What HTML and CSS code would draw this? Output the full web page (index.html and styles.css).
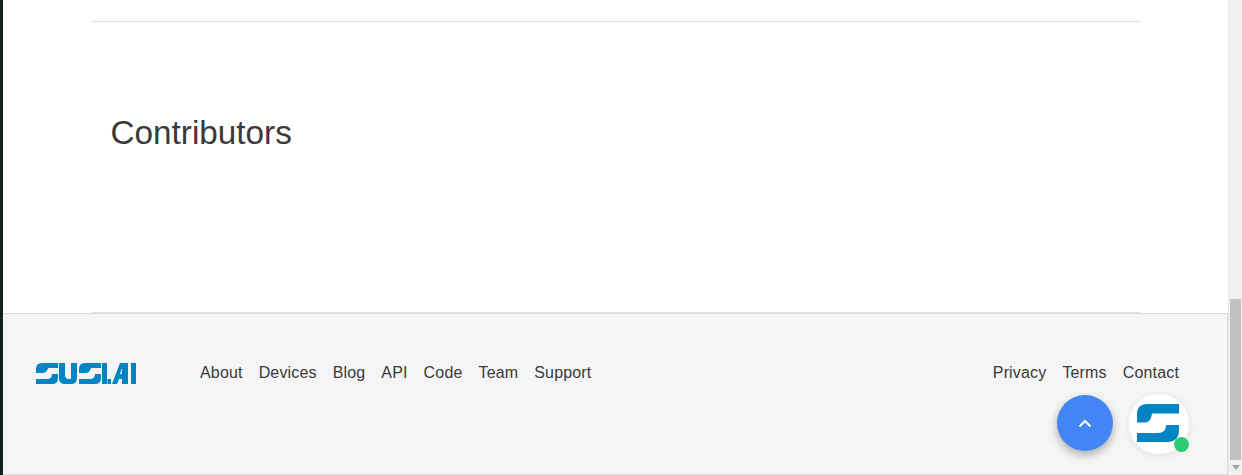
FILE: index.html
```html
<!DOCTYPE html>
<html lang="en">
<head>
    <meta charset="UTF-8">
    <title>SUSI.AI - Contributors</title>
    <link rel="stylesheet" href="styles.css">
</head>
<body>
    <div class="edge"></div>
    <div class="page">
        <main class="content">
            <hr class="rule">
            <h2 class="heading">Contributors</h2>
            <hr class="rule rule-bottom">
        </main>
        <footer class="footer">
            <a class="logo" href="#" aria-label="SUSI.AI">
                <svg width="100" height="21" viewBox="0 0 100 21" fill="#0084c4" fill-rule="evenodd">
                    <path d="M6 0H22V5H12Q11 10 6 10H0V6Q0 0 6 0Z"/>
                    <path d="M16 11H22V15Q22 21 16 21H0V16H11Q16 16 16 11Z"/>
                    <path d="M23 0H29V12Q29 16 33 16H35V0H41V15Q41 21 35 21H29Q23 21 23 15Z"/>
                    <path d="M49 0H65V5H55Q54 10 49 10H43V6Q43 0 49 0Z"/>
                    <path d="M59 11H65V15Q65 21 59 21H43V16H54Q59 16 59 11Z"/>
                    <path d="M66 0H71V21H66Z"/>
                    <path d="M71.5 16H75V21H71.5Z"/>
                    <path d="M76 21L84 0H92V21H86V16H83L81 21ZM86 6H85.5L84 11H86Z"/>
                    <path d="M95 0H100V21H95Z"/>
                </svg>
            </a>
            <nav class="links">
                <a href="#">About</a>
                <a href="#">Devices</a>
                <a href="#">Blog</a>
                <a href="#">API</a>
                <a href="#">Code</a>
                <a href="#">Team</a>
                <a href="#">Support</a>
            </nav>
            <nav class="links links-right">
                <a href="#">Privacy</a>
                <a href="#">Terms</a>
                <a href="#">Contact</a>
            </nav>
        </footer>
    </div>
    <div class="scrollbar">
        <div class="track"><div class="thumb"></div></div>
        <div class="arrow"></div>
    </div>

    <button class="to-top" aria-label="Back to top">
        <svg width="14" height="9" viewBox="0 0 14 9" fill="none" stroke="#fff" stroke-width="2">
            <path d="M1.5 7.5L7 2L12.5 7.5"/>
        </svg>
    </button>
    <button class="chat" aria-label="Open chat">
        <svg width="42" height="38" viewBox="0 0 42 38" fill="#0084c4">
            <path d="M10 0H42V9.5H15Q14 18.5 8 18.5H0V10Q0 0 10 0Z"/>
            <path d="M29 21H42V26Q42 38 30 38H0V29H21Q29 29 29 21Z"/>
        </svg>
        <span class="online"></span>
    </button>
</body>
</html>
```

FILE: styles.css
```css
* {
    margin: 0;
    padding: 0;
    box-sizing: border-box;
}

body {
    font-family: 'Liberation Sans', Arial, sans-serif;
    height: 475px;
    overflow: hidden;
    display: flex;
    background: #fff;
    color: #3a3a3a;
}

.edge {
    width: 3px;
    background: #16211f;
}

.page {
    flex: 1;
    display: flex;
    flex-direction: column;
}

.content {
    height: 313px;
    padding: 21px 87px 0 88px;
}

.rule {
    border: none;
    border-top: 1px solid #e0e0e0;
}

.heading {
    font-size: 33.3px;
    font-weight: 400;
    line-height: 40px;
    margin: 91px 0 0 19.5px;
    height: 199px;
}

.footer {
    flex: 1;
    display: flex;
    align-items: flex-start;
    padding: 49px 48px 0 33px;
    background: #f5f5f5;
    border: 1px solid #dcdcdc;
    border-left: none;
}

.logo {
    display: block;
    height: 21px;
    margin-right: 64px;
}

.links {
    display: flex;
    gap: 16px;
    font-size: 16px;
    line-height: 20px;
    letter-spacing: 0.16px;
}

.links a {
    color: #3a3a3a;
    text-decoration: none;
}

.links-right {
    margin-left: auto;
}

.scrollbar {
    width: 14px;
    display: flex;
    flex-direction: column;
    background: #f1f1f1;
    border-left: 1px solid #e8e8e8;
}

.track {
    flex: 1;
    padding-top: 299px;
}

.thumb {
    height: 161px;
    margin: 0 1px;
    background: #c1c1c1;
}

.arrow {
    height: 15px;
    position: relative;
}

.arrow::after {
    content: '';
    position: absolute;
    left: 3px;
    top: 5px;
    border: 4px solid transparent;
    border-top: 5px solid #a3a3a3;
    border-bottom: none;
}

.to-top {
    position: absolute;
    left: 1057px;
    top: 395px;
    width: 56px;
    height: 56px;
    border: none;
    border-radius: 50%;
    background: #4285f4;
    box-shadow: 0 4px 10px rgba(0, 0, 0, 0.3);
    display: flex;
    align-items: center;
    justify-content: center;
}

.chat {
    position: absolute;
    left: 1129px;
    top: 394px;
    width: 60px;
    height: 60px;
    padding: 0 2px 2px 0;
    border: none;
    border-radius: 50%;
    background: #fff;
    box-shadow: 0 2px 10px rgba(0, 0, 0, 0.08);
    display: flex;
    align-items: center;
    justify-content: center;
}

.online {
    position: absolute;
    right: 0;
    bottom: 2px;
    width: 15px;
    height: 15px;
    border-radius: 50%;
    background: #2ecc71;
}
```
